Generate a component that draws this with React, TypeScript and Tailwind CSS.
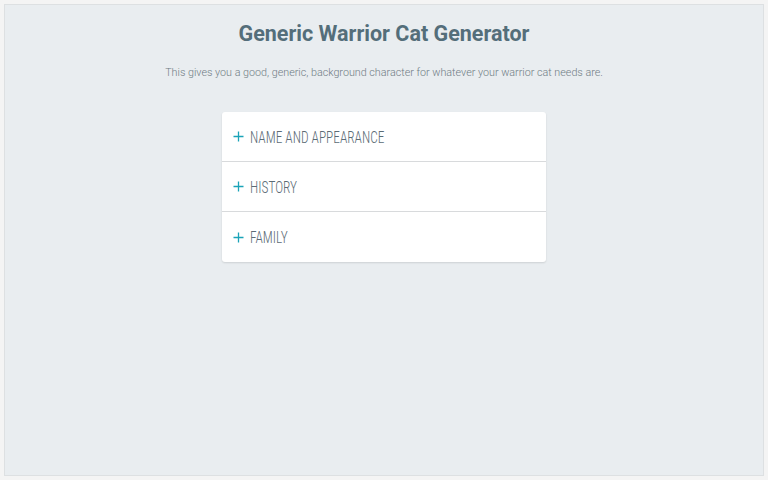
import React from 'react';

const sections = ['Name and Appearance', 'History', 'Family'];

const Plus = () => (
  <svg width="11" height="11" viewBox="0 0 11 11" className="shrink-0">
    <path d="M5.5 0.5v10M0.5 5.5h10" stroke="#1aa3b8" strokeWidth="1.3" />
  </svg>
);

export default function App() {
  return (
    <div className="h-screen w-full bg-[#f4f4f4] p-1">
      <div className="flex h-[472px] flex-col items-center border border-[#dde0e2] bg-[#e9edf0] font-['Roboto',sans-serif]">
        <h1 className="mt-[14px] text-[21.5px] font-bold leading-[30px] text-[#546e7a]">
          Generic Warrior Cat Generator
        </h1>
        <p className="mt-[17px] text-[10.75px] font-light leading-[14px] text-[#6f7c84]">
          This gives you a good, generic, background character for whatever your warrior cat needs are.
        </p>
        <div className="mt-[32px] w-[324px] rounded-[3px] bg-white shadow-[0_1px_2px_rgba(0,0,0,0.12)]">
          {sections.map((s, i) => (
            <button
              key={s}
              className={`flex h-[50px] w-full items-center gap-[6px] px-[11px] text-left ${i < sections.length - 1 ? 'border-b border-[#d8dadc]' : ''}`}
            >
              <Plus />
              <span className="origin-left scale-x-[0.81] pt-[3px] font-['Roboto_Condensed','Roboto',sans-serif] text-[16.5px] font-light uppercase leading-none text-[#5b6b75]">
                {s}
              </span>
            </button>
          ))}
        </div>
      </div>
    </div>
  );
}
